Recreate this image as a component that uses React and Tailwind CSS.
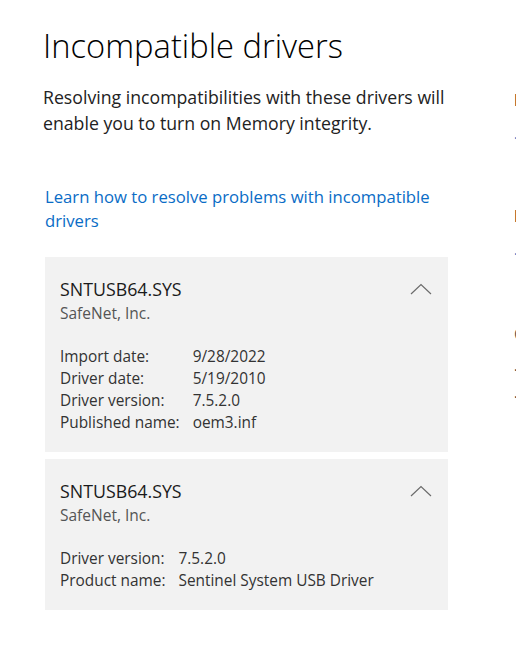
import React from "react";

const font = { fontFamily: '"Open Sans", "Noto Sans", sans-serif' };

function Chevron() {
  return (
    <svg width="22" height="12" viewBox="0 0 22 12" className="shrink-0">
      <path d="M1 11 L11 1.5 L21 11" fill="none" stroke="#6b6b6b" strokeWidth="1.2" />
    </svg>
  );
}

function DriverCard({ name, vendor, rows }) {
  return (
    <div className="w-[403px] bg-[#f2f2f2] pl-[15px] pr-[16px] pt-[20px] pb-[18px]">
      <div className="flex items-start justify-between">
        <div>
          <div className="text-[17.8px] leading-[24px] text-[#1a1a1a]">{name}</div>
          <div className="text-[15.5px] leading-[24px] text-[#555]">{vendor}</div>
        </div>
        <div className="pt-[6px]">
          <Chevron />
        </div>
      </div>
      <div className="mt-[21px] grid grid-cols-[auto_1fr] gap-x-[13px] text-[15.4px] leading-[22px] text-[#333]">
        {rows.map(([k, v]) => (
          <React.Fragment key={k}>
            <div>{k}</div>
            <div>{v}</div>
          </React.Fragment>
        ))}
      </div>
    </div>
  );
}

export default function App() {
  return (
    <div className="w-[516px] h-[671px] overflow-hidden bg-white flex" style={font}>
      <div className="w-[514px] shrink-0 pl-[43px] pr-[58px] pt-[26px]">
        <h1 className="text-[32.7px] leading-[40px] font-light text-black">Incompatible drivers</h1>
        <p className="mt-[18px] text-[17.7px] leading-[26px] text-[#222]">
          Resolving incompatibilities with these drivers will enable you to turn on Memory integrity.
        </p>
        <a href="#" className="block mt-[49px] ml-[2px] text-[16.7px] leading-[24px] text-[#0a6cc6]">
          Learn how to resolve problems with incompatible drivers
        </a>
        <div className="mt-[24px] ml-[2px] flex flex-col gap-[7px]">
          <DriverCard
            name="SNTUSB64.SYS"
            vendor="SafeNet, Inc."
            rows={[
              ["Import date:", "9/28/2022"],
              ["Driver date:", "5/19/2010"],
              ["Driver version:", "7.5.2.0"],
              ["Published name:", "oem3.inf"],
            ]}
          />
          <DriverCard
            name="SNTUSB64.SYS"
            vendor="SafeNet, Inc."
            rows={[
              ["Driver version:", "7.5.2.0"],
              ["Product name:", "Sentinel System USB Driver"],
            ]}
          />
        </div>
      </div>
      <div className="shrink-0 pt-[88px] whitespace-nowrap text-[16px]">
        <div className="leading-[24px] font-semibold text-black">Have a question?</div>
        <div className="mt-[10px] leading-[24px] text-[14px] text-[#0a6cc6]">.Get help</div>
        <div className="mt-[58px] leading-[24px] font-semibold text-black">Help improve</div>
        <div className="mt-[10px] leading-[24px] text-[14px] text-[#0a6cc6]">.Give us feedback</div>
        <div className="mt-[60px] leading-[24px] text-[#555]">Change your privacy</div>
        <div className="mt-[8px] leading-[24px] text-[14px] text-[#333]">.View and change</div>
        <div className="mt-[3px] leading-[24px] text-[14px] text-[#333]">.for your device</div>
      </div>
    </div>
  );
}
